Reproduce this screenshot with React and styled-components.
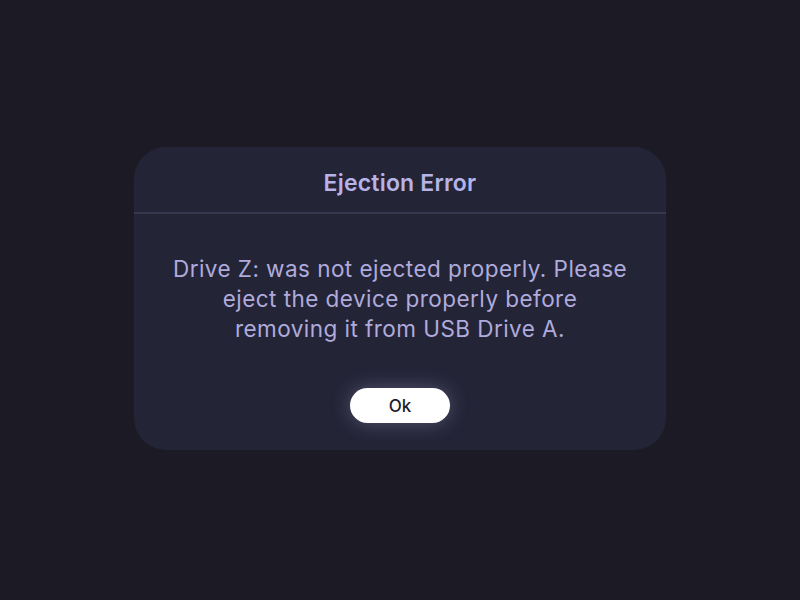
import styled, { createGlobalStyle } from 'styled-components';

const Global = createGlobalStyle`
  html, body {
    margin: 0;
    padding: 0;
    background: #1b1a25;
  }
  body {
    font-family: Inter, "Noto Sans", sans-serif;
  }
`;

const Page = styled.div`
  width: 800px;
  height: 600px;
  display: flex;
  align-items: center;
  justify-content: center;
  background: #1b1a25;
`;

const Dialog = styled.div`
  width: 532px;
  height: 303px;
  margin-top: -3px;
  box-sizing: border-box;
  background: #242437;
  border-radius: 32px;
  display: flex;
  flex-direction: column;
`;

const Header = styled.div`
  height: 67px;
  display: flex;
  align-items: center;
  justify-content: center;
  border-bottom: 2px solid #39374f;
  box-sizing: border-box;
  padding-top: 6px;
`;

const Title = styled.h1`
  margin: 0;
  font-size: 23px;
  font-weight: 600;
  color: #b6b3e8;
  letter-spacing: 0.2px;
`;

const Body = styled.div`
  flex: 1;
  display: flex;
  flex-direction: column;
  align-items: center;
  padding-top: 40px;
`;

const Message = styled.p`
  margin: 0;
  text-align: center;
  font-size: 22.5px;
  line-height: 30px;
  letter-spacing: 0.45px;
  color: #afabdc;
  white-space: nowrap;
`;

const OkButton = styled.button`
  margin-top: 44px;
  width: 100px;
  height: 35px;
  border: none;
  border-radius: 18px;
  background: #ffffff;
  color: #1e1d2c;
  font-family: inherit;
  font-size: 17px;
  font-weight: 500;
  box-shadow: 0 0 20px rgba(210, 210, 255, 0.28);
  cursor: pointer;
`;

export default function App() {
  return (
    <>
      <Global />
      <Page>
        <Dialog>
          <Header>
            <Title>Ejection Error</Title>
          </Header>
          <Body>
            <Message>
              Drive Z: was not ejected properly. Please
              <br />
              eject the device properly before
              <br />
              removing it from USB Drive A.
            </Message>
            <OkButton>Ok</OkButton>
          </Body>
        </Dialog>
      </Page>
    </>
  );
}
